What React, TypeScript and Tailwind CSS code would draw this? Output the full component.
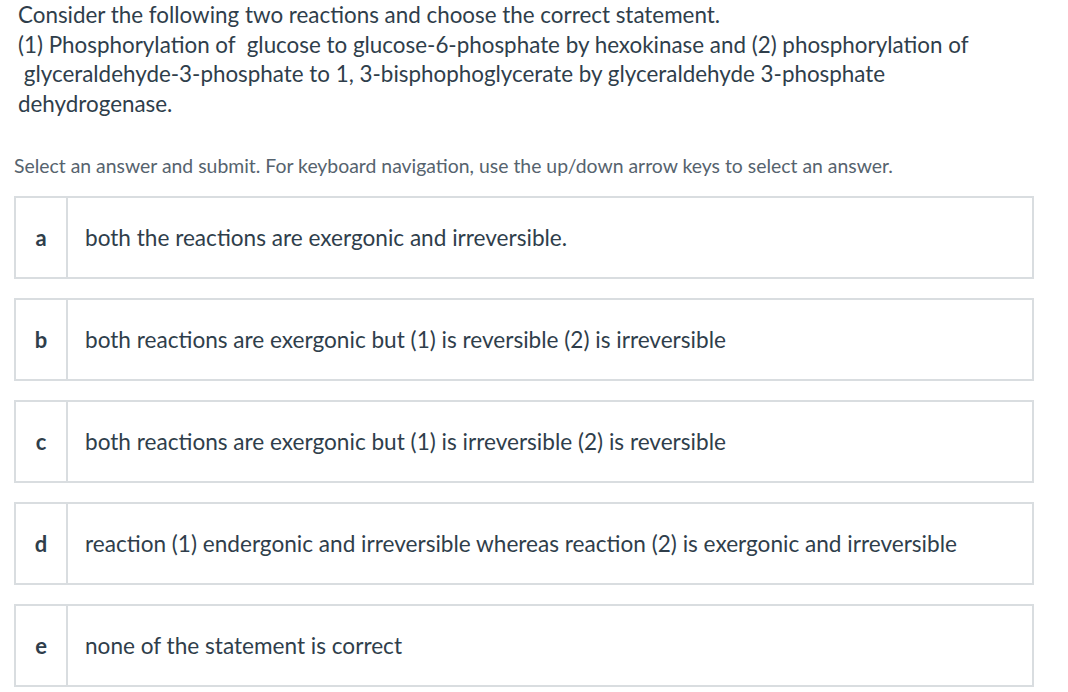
import React from 'react'

const options = [
  { key: 'a', text: 'both the reactions are exergonic and irreversible.' },
  { key: 'b', text: 'both reactions are exergonic but (1) is reversible (2) is irreversible' },
  { key: 'c', text: 'both reactions are exergonic but (1) is irreversible (2) is reversible' },
  { key: 'd', text: 'reaction (1) endergonic and irreversible whereas reaction (2) is exergonic and irreversible' },
  { key: 'e', text: 'none of the statement is correct' },
]

export default function App() {
  return (
    <div className="min-h-[692px] w-[1068px] bg-white font-['Lato','Noto_Sans',sans-serif] text-[#2f3e4b]">
      <div className="pl-[18px] pt-0 text-[22.4px] leading-[29.6px]">
        <p>Consider the following two reactions and choose the correct statement.</p>
        <p className="whitespace-pre-wrap">
          {'(1) Phosphorylation of  glucose to glucose-6-phosphate by hexokinase and (2) phosphorylation of\n glyceraldehyde-3-phosphate to 1, 3-bisphophoglycerate by glyceraldehyde 3-phosphate\ndehydrogenase.'}
        </p>
      </div>

      <p className="mt-[36px] pl-[14px] text-[19.4px] leading-[24px] text-[#56636e]">
        Select an answer and submit. For keyboard navigation, use the up/down arrow keys to select an answer.
      </p>

      <div className="ml-[14px] mt-[18px] flex w-[1020px] flex-col gap-[19px]">
        {options.map((o) => (
          <div key={o.key} className="flex h-[83px] items-center border-2 border-[#d9dde0]">
            <div className="flex h-full w-[52px] items-center justify-center border-r-2 border-[#d9dde0] pb-[1px] text-[22px] font-bold">
              {o.key}
            </div>
            <div className="pl-[17px] pt-[1px] text-[22.6px]">{o.text}</div>
          </div>
        ))}
      </div>
    </div>
  )
}
